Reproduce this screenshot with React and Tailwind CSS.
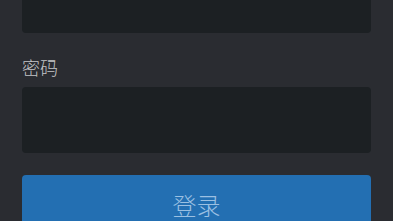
import React from "react";

export default function App() {
  return (
    <div
      className="min-h-screen overflow-hidden bg-[#2a2c31] px-[22px] flex flex-col"
      style={{ fontFamily: '"Noto Sans CJK SC", "Noto Sans", sans-serif' }}
    >
      <input
        type="text"
        className="-mt-[33px] h-[66px] w-full rounded-[4px] bg-[#1c2023] outline-none"
      />
      <label className="mt-[22px] h-[24px] text-[18px] font-light leading-[24px] text-[#c3c5c8]">
        密码
      </label>
      <input
        type="password"
        className="mt-[8px] h-[66px] w-full rounded-[4px] bg-[#1c2023] outline-none"
      />
      <button className="mt-[22px] h-[60px] w-full shrink-0 rounded-[4px] bg-[#236fb2] text-[24px] font-light text-[#9bc0e2]">
        登录
      </button>
    </div>
  );
}
